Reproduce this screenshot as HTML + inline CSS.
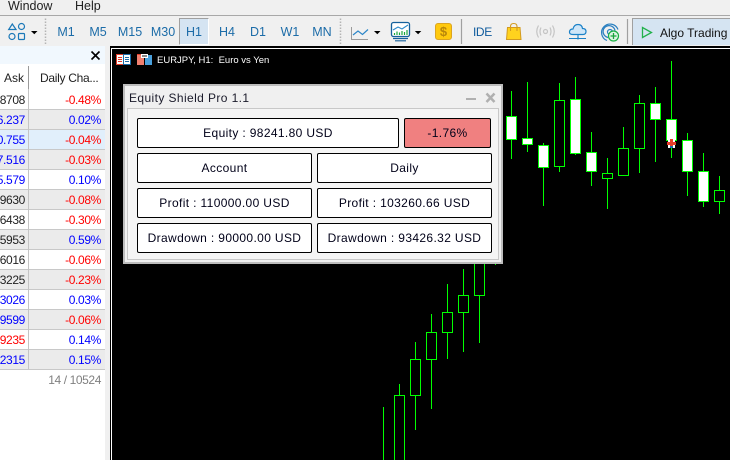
<!DOCTYPE html>
<html><head><meta charset="utf-8"><style>
html,body{margin:0;padding:0}
body{width:730px;height:460px;overflow:hidden;position:relative;background:#f0f0f0;font-family:"Liberation Sans",sans-serif}
.a{position:absolute}
.t{position:absolute;white-space:nowrap;line-height:16px}
.m{top:24px;width:32px;text-align:center;font-size:12.5px;color:#1c6ca8}
.r{position:absolute;left:0;width:105px;height:19px;border-bottom:1px solid #c8c8c8}
.r b{position:absolute;font-weight:normal;font-size:12px;line-height:19px;top:1px;white-space:nowrap;letter-spacing:-.35px}
.r b.c{right:4px}
.w{background:#fff}.g{background:#ebebeb}.s{background:#e1effb}
.dv{position:absolute;left:28px;top:89px;width:1px;height:280px;background:#c4c4c4}
.btn{position:absolute;box-sizing:border-box;height:30px;background:#fff;border:1px solid #000;border-radius:2px;text-align:center;font-size:12px;letter-spacing:.36px;line-height:29px;color:#000018;white-space:nowrap}
</style></head><body>
<div class="a" style="left:0;top:0;width:730px;height:15px;background:#f0f0f0"></div>
<div class="t" style="left:8px;top:-2px;font-size:12.5px;color:#222">Window</div>
<div class="t" style="left:75px;top:-2px;font-size:12.5px;color:#222">Help</div>
<div class="a" style="left:0;top:15px;width:730px;height:1px;background:#a8a8a8"></div>

<div class="a" style="left:179px;top:18px;width:28px;height:25px;background:#d5e4f2;border:1px solid;border-color:#a0a0a0 #fff #fff #a0a0a0"></div>
<div class="a" style="left:632px;top:18px;width:98px;height:26px;background:#d5e4f2;border-left:1px solid #a0a0a0;border-top:1px solid #a0a0a0"></div>
<div class="t m" style="left:50px">M1</div>
<div class="t m" style="left:82px">M5</div>
<div class="t m" style="left:114px">M15</div>
<div class="t m" style="left:147px">M30</div>
<div class="t m" style="left:178px">H1</div>
<div class="t m" style="left:211px">H4</div>
<div class="t m" style="left:242px">D1</div>
<div class="t m" style="left:274px">W1</div>
<div class="t m" style="left:306px">MN</div>
<div class="t" style="left:473px;top:24px;font-size:12px;color:#0e5a9c;letter-spacing:-.4px">IDE</div>
<div class="t" style="left:660px;top:25px;font-size:12px;color:#111">Algo Trading</div>

<svg class="a" style="left:0;top:0" width="730" height="46" viewBox="0 0 730 46">
<g fill="none" stroke="#1b78b8" stroke-width="1.2">
<path d="M12.3 24L16 29.5H8.7Z"/><circle cx="21.5" cy="26.5" r="3"/><circle cx="12" cy="36.5" r="3"/><rect x="18.5" y="33.5" width="6" height="6" rx="1"/>
</g>
<path d="M31 31h6.5l-3.2 3.2z" fill="#000"/>
<path d="M414.800 31h6.500l-3.200 3.200zM374 31h6.500l-3.200 3.200z" fill="#000"/>
<path d="M45.500 18.500V44M340.500 18.500V44" stroke="#b4b4b4" stroke-width="1.500" stroke-dasharray="1.500 1.500"/>
<path d="M351.500 27V39.500H368" fill="none" stroke="#9a9a9a"/>
<path d="M353 35L358 31L362.500 34.500L368 29.500" fill="none" stroke="#2c86c8" stroke-width="1.200"/>
<!-- monitor -->
<rect x="391.500" y="22.500" width="18" height="14" rx="2" fill="#fff" stroke="#15619c" stroke-width="1.300"/>
<path d="M393 38.500H408M395 40.800H406" stroke="#15619c" stroke-width="1.200" fill="none"/>
<path d="M393 30L398 27L402 29L408 25" fill="none" stroke="#2e8ccc" stroke-width="1.100"/>
<path d="M394.500 35V33M397 35V31.500M399.500 35V32.500M402 35V31M404.500 35V32M407 35V30" stroke="#19a83c" stroke-width="1.200"/>
<!-- dollar -->
<rect x="435.500" y="23.500" width="16" height="16" rx="2.500" fill="#ffc90e" stroke="#dca520"/>
<text x="443.500" y="36" text-anchor="middle" font-size="13" font-weight="bold" font-family="Liberation Sans,sans-serif" fill="#b8860b">$</text>
<path d="M461.500 19V44M627.500 19V44" stroke="#a0a0a0" stroke-width="1.200"/>
<!-- bag -->
<path d="M507.500 27.500H520L521 39.500H506.500Z" fill="#ffd21e" stroke="#d29a20"/>
<path d="M510.500 31V26.500Q510.500 23.500 513.700 23.500Q517 23.500 517 26.500V31" fill="none" stroke="#d29a20" stroke-width="1.100"/>
<!-- signal -->
<g fill="none" stroke="#c4c4c4" stroke-width="1.200">
<circle cx="545.500" cy="31.500" r="2"/>
<path d="M541 27.500Q539 31.500 541 35.500M550 27.500Q552 31.500 550 35.500M538.500 25.500Q535 31.500 538.500 37.500M552.500 25.500Q556 31.500 552.500 37.500"/>
</g>
<!-- cloud -->
<path d="M573 34.500Q569 34.500 569.500 31.500Q570 29 573 29Q574 24.500 578 24.500Q582 24.500 582.500 28.500Q586 28.500 586 31.500Q586 34.500 583 34.500Z" fill="#cfe6f8" stroke="#1c82c8" stroke-width="1.200"/>
<path d="M578 34.500V38M569 38.500H586" stroke="#1c82c8" stroke-width="1.100"/><circle cx="578" cy="38.500" r="1" fill="#1c82c8"/>
<!-- cloud-signal -->
<g fill="none" stroke="#2a7fc0" stroke-width="1.200">
<path d="M607 40.500A8.500 8.500 0 1 1 618 29.500"/><path d="M608 37.500A6 6 0 1 1 615 30.500"/><circle cx="610" cy="32" r="2.500"/>
</g>
<circle cx="613.500" cy="36" r="5" fill="#dff5e4" stroke="#19b043" stroke-width="1.200"/>
<path d="M610.500 36H616.500M613.500 33V39" stroke="#19a33c" stroke-width="1.300"/>
<!-- play -->
<path d="M642.500 27.500V37.500L651.500 32.500Z" fill="none" stroke="#22b14c" stroke-width="1.300"/>
</svg>

<!-- market watch -->
<div class="a" style="left:0;top:46px;width:105px;height:18px;background:#f1f8fe"></div>
<div class="a" style="left:0;top:64px;width:105px;height:396px;background:#fff"></div>
<div class="a" style="left:28px;top:66px;width:1px;height:23px;background:#9a9a9a"></div>
<svg class="a" style="left:90px;top:50px" width="12" height="12"><path d="M1.500 1.500L9.500 9.500M9.500 1.500L1.500 9.500" stroke="#000" stroke-width="1.600"/></svg>
<div class="t" style="left:4px;top:70px;font-size:12px;color:#222">Ask</div>
<div class="t" style="left:40px;top:70px;font-size:12px;color:#222;letter-spacing:-.3px">Daily Cha...</div>

<div class="r w" style="top:90px"><b style="right:80px;color:#222">08708</b><b class="c" style="color:#f00">-0.48%</b></div>
<div class="r g" style="top:110px"><b style="right:80px;color:#00f">6.237</b><b class="c" style="color:#00f">0.02%</b></div>
<div class="r s" style="top:130px"><b style="right:80px;color:#00f">0.755</b><b class="c" style="color:#f00">-0.04%</b></div>
<div class="r g" style="top:150px"><b style="right:80px;color:#00f">7.516</b><b class="c" style="color:#f00">-0.03%</b></div>
<div class="r w" style="top:170px"><b style="right:80px;color:#00f">5.579</b><b class="c" style="color:#00f">0.10%</b></div>
<div class="r g" style="top:190px"><b style="right:80px;color:#222">39630</b><b class="c" style="color:#f00">-0.08%</b></div>
<div class="r w" style="top:210px"><b style="right:80px;color:#222">16438</b><b class="c" style="color:#f00">-0.30%</b></div>
<div class="r g" style="top:230px"><b style="right:80px;color:#222">15953</b><b class="c" style="color:#00f">0.59%</b></div>
<div class="r w" style="top:250px"><b style="right:80px;color:#222">46016</b><b class="c" style="color:#f00">-0.06%</b></div>
<div class="r g" style="top:270px"><b style="right:80px;color:#222">33225</b><b class="c" style="color:#f00">-0.23%</b></div>
<div class="r w" style="top:290px"><b style="right:80px;color:#00f">13026</b><b class="c" style="color:#00f">0.03%</b></div>
<div class="r g" style="top:310px"><b style="right:80px;color:#00f">99599</b><b class="c" style="color:#f00">-0.06%</b></div>
<div class="r w" style="top:330px"><b style="right:80px;color:#f00">39235</b><b class="c" style="color:#00f">0.14%</b></div>
<div class="r g" style="top:350px"><b style="right:80px;color:#00f">52315</b><b class="c" style="color:#00f">0.15%</b></div>
<div class="dv"></div>
<div class="t" style="right:629px;top:372px;font-size:12px;color:#808080;letter-spacing:-.4px">14 / 10524</div>
<div class="a" style="left:105px;top:46px;width:5px;height:414px;background:#f0f0f0"></div>

<!-- chart -->
<svg class="a" style="left:0;top:0" width="730" height="460" viewBox="0 0 730 460" shape-rendering="crispEdges">
<rect x="110" y="46" width="620" height="414" fill="#000"/>
<rect x="111" y="48" width="619" height="1" fill="#fff"/>
<rect x="111" y="48" width="1" height="412" fill="#fff"/>
<g stroke="#0f0" stroke-width="1">
<path d="M383.500 407V460M399.500 384V395M415.500 342V430M431.500 314V409M447.500 284V359M463.500 269V352M479.500 260V343M495.500 262V265M511.500 91V159M527.500 82V152M543.500 143V206M559.500 83V172M575.500 77V155M591.500 132V186M607.500 158V209M623.500 127V176M639.500 95V173M655.500 87V162M671.500 61V158M687.500 133V196M703.500 153V207M719.500 176V214"/>
</g>
<g stroke="#0f0" stroke-width="1" fill="#000">
<rect x="394.500" y="395.500" width="10" height="70"/>
<rect x="410.500" y="359.500" width="10" height="36"/>
<rect x="426.500" y="332.500" width="10" height="27"/>
<rect x="442.500" y="312.500" width="10" height="20"/>
<rect x="458.500" y="295.500" width="10" height="17"/>
<rect x="474.500" y="255.500" width="10" height="40"/>
<rect x="506.500" y="116.500" width="10" height="23" fill="#fff"/>
<rect x="522.500" y="138.500" width="10" height="6" fill="#fff"/>
<rect x="538.500" y="145.500" width="10" height="22" fill="#fff"/>
<rect x="554.500" y="100.500" width="10" height="66"/>
<rect x="570.500" y="99.500" width="10" height="54" fill="#fff"/>
<rect x="586.500" y="152.500" width="10" height="19" fill="#fff"/>
<rect x="602.500" y="173.500" width="10" height="5"/>
<rect x="618.500" y="148.500" width="10" height="27"/>
<rect x="634.500" y="103.500" width="10" height="45"/>
<rect x="650.500" y="103.500" width="10" height="16" fill="#fff"/>
<rect x="666.500" y="119.500" width="10" height="21" fill="#fff"/>
<rect x="682.500" y="140.500" width="10" height="31" fill="#fff"/>
<rect x="698.500" y="171.500" width="10" height="30" fill="#fff"/>
<rect x="714.500" y="190.500" width="10" height="11"/>
</g>
<!-- trade marker -->
<rect x="668" y="139" width="7" height="9" fill="#fff"/>
<rect x="670" y="139" width="3" height="9" fill="#e8402a"/>
<rect x="667" y="142" width="9" height="3" fill="#e8402a"/>
<rect x="670" y="146" width="3" height="2" fill="#1c6ca8"/>
<!-- title icons -->
<rect x="116.500" y="54.500" width="14" height="10" fill="#fff" stroke="#e23c28"/>
<rect x="123.500" y="54.500" width="7" height="10" fill="#fff" stroke="#1c6ca8"/>
<path d="M118 57.500H122M118 59.500H122M118 61.500H122" stroke="#e23c28"/>
<path d="M125 57.500H129M125 59.500H129M125 61.500H129" stroke="#1c6ca8"/>
<rect x="137" y="55" width="7" height="10" fill="#f08070"/>
<rect x="137" y="54" width="7" height="1" fill="#e23c28"/>
<rect x="145" y="55" width="7" height="10" fill="#4aa0dc"/>
<rect x="141" y="54" width="7" height="4" fill="#fff"/>
<rect x="142" y="55" width="5" height="2" fill="#888"/>
</svg>
<div class="t" style="left:157px;top:53px;font-size:9.5px;color:#fff">EURJPY, H1:&nbsp; Euro vs Yen</div>

<!-- dialog -->
<div class="a" style="left:123px;top:84px;width:380px;height:180px;box-sizing:border-box;background:#f0f0f0;border:2px solid #bdbdbd"></div>
<div class="t" style="left:129px;top:90px;font-size:12px;color:#1a1a2a;letter-spacing:.4px">Equity Shield Pro 1.1</div>
<svg class="a" style="left:460px;top:88px" width="40" height="20"><rect x="6" y="10" width="10" height="2" fill="#b0b0b0"/><path d="M26.500 5.500L34.500 14M34.500 5.500L26.500 14" stroke="#b0b0b0" stroke-width="2.500"/></svg>
<div class="a" style="left:127px;top:108px;width:372px;height:152px;box-sizing:border-box;background:#f5f5f5;border:1px solid #c8c8c8"></div>
<div class="btn" style="left:137px;top:118px;width:262px">Equity : 98241.80 USD</div>
<div class="btn" style="left:404px;top:118px;width:87px;background:#f08080">-1.76%</div>
<div class="btn" style="left:137px;top:153px;width:175px">Account</div>
<div class="btn" style="left:317px;top:153px;width:175px">Daily</div>
<div class="btn" style="left:137px;top:188px;width:175px">Profit : 110000.00 USD</div>
<div class="btn" style="left:317px;top:188px;width:175px">Profit : 103260.66 USD</div>
<div class="btn" style="left:137px;top:223px;width:175px">Drawdown : 90000.00 USD</div>
<div class="btn" style="left:317px;top:223px;width:175px">Drawdown : 93426.32 USD</div>
</body></html>
